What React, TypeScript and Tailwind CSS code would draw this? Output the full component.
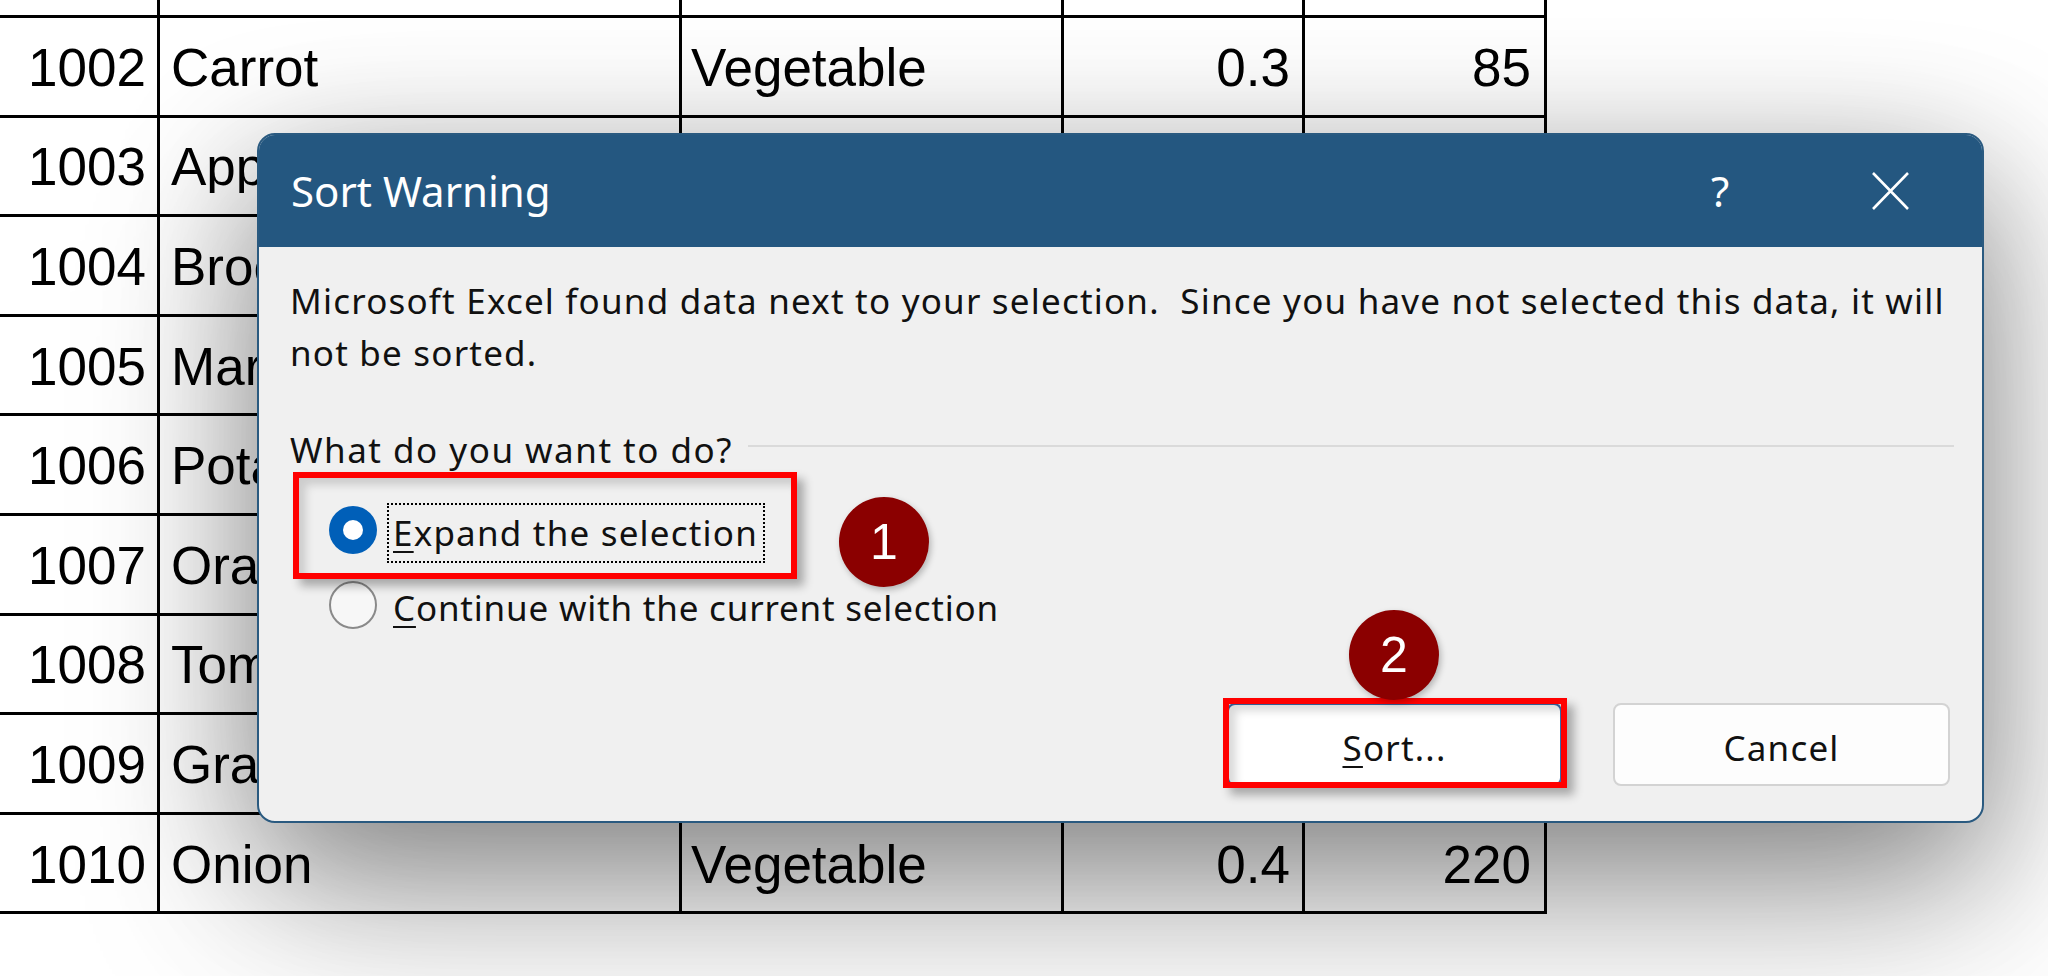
const rows = [
  ["1002", "Carrot", "Vegetable", "0.3", "85"],
  ["1003", "Apple", "", "", ""],
  ["1004", "Broccoli", "", "", ""],
  ["1005", "Marrow", "", "", ""],
  ["1006", "Potato", "", "", ""],
  ["1007", "Orange", "", "", ""],
  ["1008", "Tomato", "", "", ""],
  ["1009", "Grapes", "", "", ""],
  ["1010", "Onion", "Vegetable", "0.4", "220"],
];

// rows whose name cell runs under the dialog
const covered = ["1003", "1004", "1005", "1006", "1007", "1008", "1009"];

function Cells({ cols }: { cols: string[] }) {
  const clip = covered.includes(cols[0]);
  return (
    <>
      <div className="w-[160px] h-full border-r-[3px] border-black flex items-center justify-end pr-[11px] pt-[2px]">
        {cols[0]}
      </div>
      <div className="w-[522px] h-full border-r-[3px] border-black flex items-center pl-[11px] pt-[2px]">
        {clip ? (
          <span className="max-w-[86px] overflow-hidden whitespace-nowrap">{cols[1]}</span>
        ) : (
          cols[1]
        )}
      </div>
      <div className="w-[382px] h-full border-r-[3px] border-black flex items-center pl-[9px] pt-[2px]">
        {cols[2]}
      </div>
      <div className="w-[241px] h-full border-r-[3px] border-black flex items-center justify-end pr-[12px] pt-[2px]">
        {cols[3]}
      </div>
      <div className="w-[242px] h-full border-r-[3px] border-black flex items-center justify-end pr-[13px] pt-[2px]">
        {cols[4]}
      </div>
    </>
  );
}

function Sheet() {
  return (
    <div className="w-[1547px] font-['Liberation_Sans',Arial,sans-serif] text-[53px] leading-none text-black">
      <div className="flex h-[18px] border-b-[3px] border-black">
        <Cells cols={["", "", "", "", ""]} />
      </div>
      {rows.map((r) => (
        <div key={r[0]} className="flex h-[99.6px] border-b-[3px] border-black">
          <Cells cols={r} />
        </div>
      ))}
    </div>
  );
}

function SortWarning() {
  return (
    <div className="absolute left-[257px] top-[133px] w-[1727px] h-[690px] rounded-[18px] border-2 border-[#2a5a80] bg-[#f0f0f0] overflow-hidden shadow-[0_40px_140px_rgba(0,0,0,0.4),0_90px_200px_rgba(0,0,0,0.18)] font-['Noto_Sans',sans-serif] text-[#111]">
      {/* title bar */}
      <div className="h-[112px] bg-[#245780] flex items-center pl-[32px] text-white">
        <span className="text-[42px] leading-none">Sort Warning</span>
        <span className="ml-auto w-[40px] text-center text-[42px] leading-none">?</span>
        <svg className="ml-[132px] mr-[73px]" width="37" height="38" viewBox="0 0 37 38">
          <path d="M1 1 L36 37 M36 1 L1 37" stroke="white" strokeWidth="2.6" fill="none" />
        </svg>
      </div>

      {/* body */}
      <div className="pl-[31px] pr-[28px] pt-[28px] text-[35px] leading-[52px] tracking-[1.2px]">
        <p className="whitespace-nowrap">
          Microsoft Excel found data next to your selection.&nbsp; Since you have not selected this data, it will
          <br />
          not be sorted.
        </p>

        <div className="mt-[45px] flex items-start">
          <span className="tracking-[1.5px]">What do you want to do?</span>
          <div className="flex-1 ml-[15px] mt-[21px] h-[2px] bg-[#dadada]" />
        </div>

        <div className="mt-[16.5px] pl-[39px]">
          <div className="h-[75px] flex items-center">
            <div className="w-12 h-12 rounded-full bg-[#005fb8] flex items-center justify-center">
              <div className="w-5 h-5 rounded-full bg-white" />
            </div>
            <span className="ml-[10px] mt-[6px] border-2 border-dotted border-black py-[2px] pl-[4px] pr-[5px]">
              <span className="underline decoration-2 underline-offset-[5px]">E</span>xpand the selection
            </span>
          </div>
          <div className="h-[75px] flex items-center">
            <div className="w-12 h-12 rounded-full border-2 border-[#8a8a8a] bg-[#f7f7f7]" />
            <span className="ml-[10px] mt-[6px] border-2 border-transparent py-[2px] pl-[4px] tracking-[0.8px]">
              <span className="underline decoration-2 underline-offset-[5px]">C</span>ontinue with the current selection
            </span>
          </div>
        </div>

        <div className="mt-[60.5px] flex justify-end gap-[51px] pr-[4px]">
          <button className="w-[335px] h-[83px] rounded-[8px] border-2 border-[#3a6cab] bg-white pt-[6px]">
            <span className="underline decoration-2 underline-offset-[5px]">S</span>ort...
          </button>
          <button className="w-[337px] h-[83px] rounded-[8px] border-2 border-[#d3d3d3] bg-[#fdfdfd] pt-[6px]">
            Cancel
          </button>
        </div>
      </div>
    </div>
  );
}

function Badge({ n, className }: { n: string; className: string }) {
  return (
    <div
      className={
        "absolute w-[90px] h-[90px] rounded-full bg-[#8b0000] text-white flex items-center justify-center font-['Liberation_Sans',Arial,sans-serif] text-[50px] leading-none shadow-[2px_3px_6px_rgba(0,0,0,0.25)] " +
        className
      }
    >
      {n}
    </div>
  );
}

export default function App() {
  return (
    <div className="relative w-[2048px] h-[976px] overflow-hidden bg-white">
      <Sheet />
      <SortWarning />

      {/* annotations */}
      <div className="absolute left-[293px] top-[472px] w-[504px] h-[107px] border-[6px] border-[#ff0000] shadow-[7px_7px_9px_rgba(0,0,0,0.3),inset_7px_7px_9px_rgba(0,0,0,0.15)]" />
      <div className="absolute left-[1223px] top-[698px] w-[344px] h-[90px] border-[6px] border-[#ff0000] shadow-[7px_7px_9px_rgba(0,0,0,0.3),inset_7px_7px_9px_rgba(0,0,0,0.15)]" />
      <Badge n="1" className="left-[839px] top-[497px]" />
      <Badge n="2" className="left-[1349px] top-[610px]" />
    </div>
  );
}
